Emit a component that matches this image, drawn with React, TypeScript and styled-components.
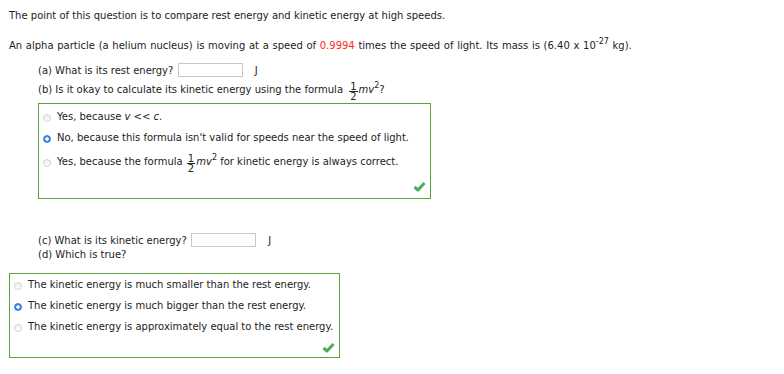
import styled, { createGlobalStyle } from "styled-components";

const Global = createGlobalStyle`
  html, body {
    margin: 0;
    padding: 0;
    background: #ffffff;
  }
  body {
    font-family: "DejaVu Sans", Verdana, sans-serif;
    font-size: 10px;
    color: #222;
  }
`;

const Fraction = ({ big }: { big?: boolean }) => (
  <Frac $big={big}>
    <Num>1</Num>
    <Den>2</Den>
  </Frac>
);

const Check = () => (
  <svg width="13" height="11" viewBox="0 0 13 11">
    <path d="M1.5 6 L5 9 L11.5 2" stroke="#4cae4c" strokeWidth="3" fill="none" strokeLinejoin="round" />
  </svg>
);

const Radio = ({ on }: { on?: boolean }) => <Dot $on={on} />;

export default function App() {
  return (
    <Page>
      <Global />
      <Intro>The point of this question is to compare rest energy and kinetic energy at high speeds.</Intro>
      <Para>
        An alpha particle (a helium nucleus) is moving at a speed of <Red>0.9994</Red> times the speed of light. Its mass is (6.40 x 10<sup>-27</sup> kg).
      </Para>
      <Indented $top={12}>
        <Line>
          (a) What is its rest energy? <Field /> <Unit>J</Unit>
        </Line>
        <Line $top={6}>
          (b) Is it okay to calculate its kinetic energy using the formula <Fraction />
          <Math>mv</Math>
          <sup>2</sup>?
        </Line>
        <Choices $w={393} $top={7}>
          <Option>
            <Radio />
            <span>
              Yes, because <Math>v</Math> &lt;&lt; <Math>c</Math>.
            </span>
          </Option>
          <Option $gap={8}>
            <Radio on />
            <span>No, because this formula isn't valid for speeds near the speed of light.</span>
          </Option>
          <Option $gap={11}>
            <Radio />
            <span>
              Yes, because the formula <Fraction big />
              <Math>mv</Math>
              <sup>2</sup> for kinetic energy is always correct.
            </span>
          </Option>
          <CheckRow $top={13}>
            <Check />
          </CheckRow>
        </Choices>
      </Indented>
      <Indented $top={35}>
        <Line>
          (c) What is its kinetic energy? <Field /> <Unit>J</Unit>
        </Line>
        <Line $top={1}>(d) Which is true?</Line>
      </Indented>
      <Choices $w={331} $top={12} $padTop={4} $padBottom={4}>
        <Option>
          <Radio />
          <span>The kinetic energy is much smaller than the rest energy.</span>
        </Option>
        <Option $gap={8}>
          <Radio on />
          <span>The kinetic energy is much bigger than the rest energy.</span>
        </Option>
        <Option $gap={8}>
          <Radio />
          <span>The kinetic energy is approximately equal to the rest energy.</span>
        </Option>
        <CheckRow $top={9}>
          <Check />
        </CheckRow>
      </Choices>
    </Page>
  );
}

const Page = styled.div`
  padding: 9px 9px;
  line-height: 13px;
  sup {
    font-size: 8px;
    line-height: 0;
    vertical-align: 5px;
  }
`;

const Intro = styled.div``;

const Para = styled.div`
  margin-top: 17px;
  word-spacing: 0.5px;
`;

const Red = styled.span`
  color: #ff2a1a;
`;

const Indented = styled.div<{ $top: number }>`
  margin-left: 29px;
  margin-top: ${(p) => p.$top}px;
`;

const Line = styled.div<{ $top?: number }>`
  height: 13px;
  margin-top: ${(p) => p.$top ?? 0}px;
  white-space: pre;
`;

const Field = styled.span`
  display: inline-block;
  vertical-align: middle;
  width: 63px;
  height: 12px;
  border: 1px solid #c8c8c8;
  margin: -2px 0 0 1px;
`;

const Unit = styled.span`
  margin-left: 9px;
`;

const Math = styled.i`
  font-style: italic;
`;

const Frac = styled.span<{ $big?: boolean }>`
  display: inline-flex;
  flex-direction: column;
  align-items: center;
  vertical-align: middle;
  font-size: 10px;
  margin: -6px 1px -7px ${(p) => (p.$big ? 1 : 3)}px;
  position: relative;
  top: 1px;
`;

const Num = styled.span`
  border-bottom: 1px solid #222;
  padding: 0 1px;
  line-height: 9px;
`;

const Den = styled.span`
  line-height: 10px;
`;

const Choices = styled.div<{ $w: number; $top: number; $padTop?: number; $padBottom?: number }>`
  width: ${(p) => p.$w}px;
  box-sizing: border-box;
  border: 1px solid #5aa43c;
  margin-top: ${(p) => p.$top}px;
  padding: ${(p) => p.$padTop ?? 6}px 0 ${(p) => p.$padBottom ?? 6}px 4px;
`;

const Option = styled.div<{ $gap?: number }>`
  display: flex;
  align-items: center;
  height: 13px;
  margin-top: ${(p) => p.$gap ?? 0}px;
  white-space: pre;
`;

const Dot = styled.span<{ $on?: boolean }>`
  width: 8px;
  height: 8px;
  border-radius: 50%;
  margin: 3px 6px 0 0;
  flex: none;
  box-sizing: border-box;
  border: 1px solid ${(p) => (p.$on ? "#2f7fd8" : "#d2d2d2")};
  background: ${(p) =>
    p.$on
      ? "radial-gradient(circle, #ffffff 0 1.4px, #3a8ee6 2px)"
      : "linear-gradient(#ededed, #ffffff)"};
`;

const CheckRow = styled.div<{ $top: number }>`
  display: flex;
  justify-content: flex-end;
  height: 11px;
  padding-right: 4px;
  margin-top: ${(p) => p.$top}px;
`;
